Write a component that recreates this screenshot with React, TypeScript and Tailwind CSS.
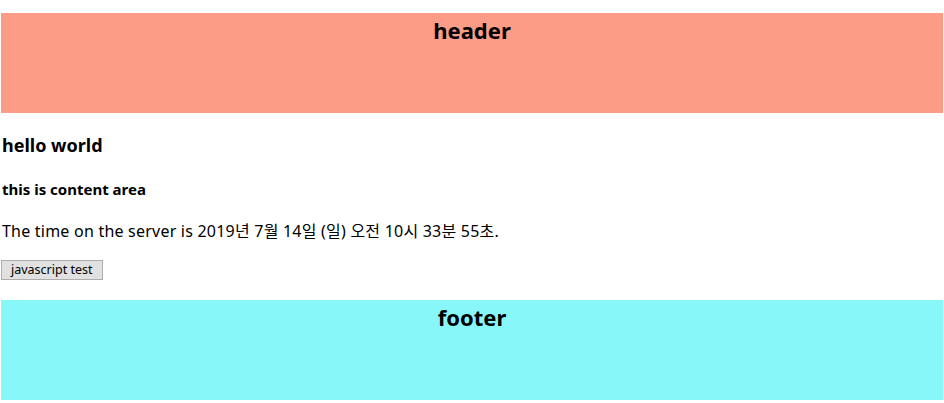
export default function App() {
  return (
    <div className="w-[944px] h-[403px] bg-white text-black pt-[13px] font-['Noto_Sans','Noto_Sans_CJK_KR',sans-serif]">
      <div className="mx-px h-[100px] bg-[#fc9c87] pt-[3px]">
        <h1 className="text-center text-[22px] font-bold leading-[28px]">header</h1>
      </div>
      <div className="px-[2px] pt-[20px] pb-[20px]">
        <h2 className="text-[18px] font-bold leading-[24px]">hello world</h2>
        <h3 className="mt-[22px] text-[15px] font-bold leading-[20px]">this is content area</h3>
        <p className="mt-[21px] text-[16px] leading-[22px] tracking-[0.22px]">
          The time on the server is 2019년 7월 14일 (일) 오전 10시 33분 55초.
        </p>
        <button className="mt-[18px] -ml-px h-[20px] px-[9px] border border-[#adadad] bg-[#e1e1e1] text-[12.5px] leading-[16px]">
          javascript test
        </button>
      </div>
      <div className="mx-px h-[100px] bg-[#87f7f9] pt-[3px]">
        <h1 className="text-center text-[22px] font-bold leading-[28px]">footer</h1>
      </div>
    </div>
  );
}
